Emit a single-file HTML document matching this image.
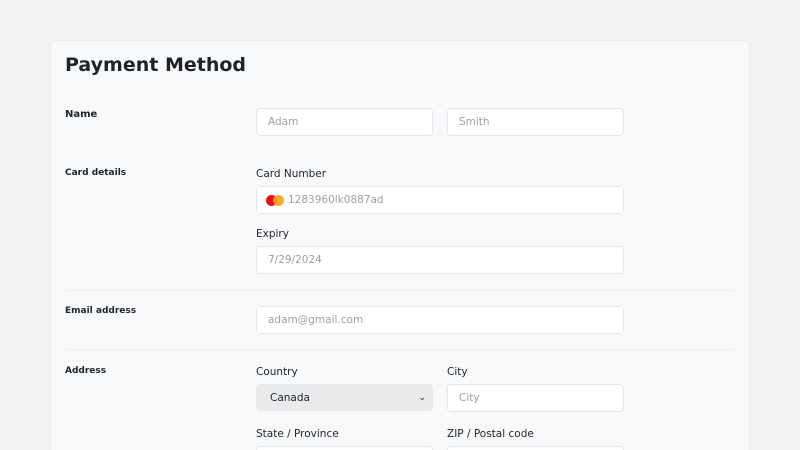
<!DOCTYPE html>
<html><head><style>
*{box-sizing:border-box;margin:0;padding:0}
html,body{width:800px;height:450px;overflow:hidden}
body{background:#f1f2f3;font-family:"DejaVu Sans","Liberation Sans",sans-serif;color:#1f2329;position:relative}
.card{position:absolute;left:50px;top:40px;width:700px;height:410px;background:#f8f9fa;border-radius:6px 6px 0 0;border:1px solid #eceef0;border-bottom:none}
.a{position:absolute}
h1{position:absolute;left:65px;top:54px;font-size:19px;font-weight:bold;color:#1f2329}
.lb{font-size:9px;font-weight:bold;color:#1f2329}
.t{font-size:10.5px;color:#1f2329}
.in{position:absolute;background:#fff;border:1px solid #e4e7eb;border-radius:4px;height:28px;font-size:10.5px;color:#9aa0a6;padding-left:11px;line-height:26px}
.sep{position:absolute;left:65px;width:670px;height:1px;background:#edf0f2}
</style></head><body>
<div class="card"></div>
<h1>Payment Method</h1>
<div class="a lb" style="left:65px;top:109px;font-size:10px">Name</div>
<div class="in" style="left:256px;top:108px;width:177px">Adam</div>
<div class="in" style="left:447px;top:108px;width:177px">Smith</div>
<div class="a lb" style="left:65px;top:168px">Card details</div>
<div class="a t" style="left:256px;top:168px">Card Number</div>
<div class="in" style="left:256px;top:186px;width:368px;padding-left:31px">1283960lk0887ad
<span class="a" style="left:9px;top:8px;width:11px;height:11px;border-radius:50%;background:#e3101d"></span>
<span class="a" style="left:16px;top:8px;width:11px;height:11px;border-radius:50%;background:#f79e1b;opacity:.9"></span></div>
<div class="a t" style="left:256px;top:228px">Expiry</div>
<div class="in" style="left:256px;top:246px;width:368px">7/29/2024</div>
<div class="sep" style="top:290px"></div>
<div class="a lb" style="left:65px;top:306px">Email address</div>
<div class="in" style="left:256px;top:306px;width:368px">adam@gmail.com</div>
<div class="sep" style="top:349px"></div>
<div class="a lb" style="left:65px;top:366px">Address</div>
<div class="a t" style="left:256px;top:366px">Country</div>
<div class="a t" style="left:447px;top:366px">City</div>
<div class="in" style="left:256px;top:384px;width:177px;background:#e9eaec;border-color:#e9eaec;color:#1f2329;height:27px;padding-left:13px">Canada<span class="a" style="right:6px;top:0;font-size:9px">&#8964;</span></div>
<div class="in" style="left:447px;top:384px;width:177px">City</div>
<div class="a t" style="left:256px;top:428px">State / Province</div>
<div class="a t" style="left:447px;top:428px">ZIP / Postal code</div>
<div class="in" style="left:256px;top:446px;width:177px;height:4px;border-bottom:none;border-radius:4px 4px 0 0"></div>
<div class="in" style="left:447px;top:446px;width:177px;height:4px;border-bottom:none;border-radius:4px 4px 0 0"></div>
</body></html>
